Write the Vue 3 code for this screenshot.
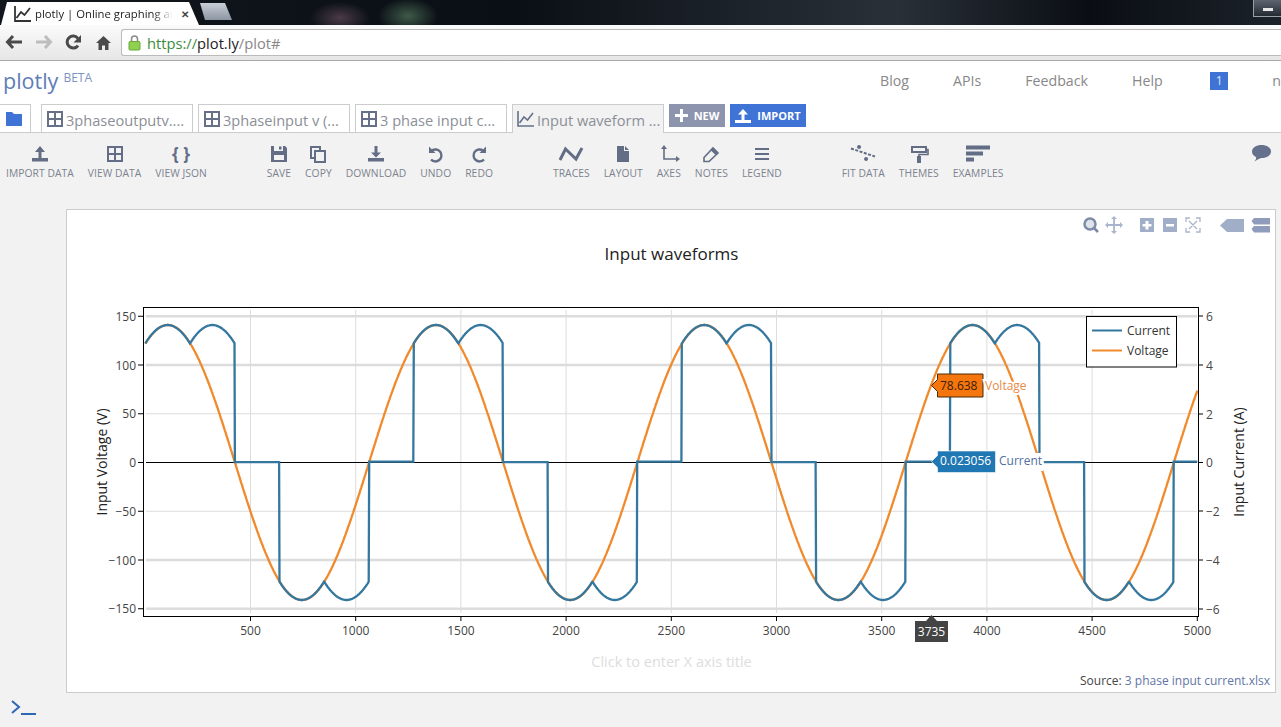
<script setup>
/* =========================
   Chart scales
========================= */
const xPos = (t) => 145.3 + t * 0.2104
const yPos = (v) => 462.5 - v * 0.975

const PERIOD = 1275

const voltage = (t) => -141 * Math.sin((2 * Math.PI * (t - 426)) / PERIOD)

/* rectified current, plotted on the same pixel range as the voltage */
const current = (t) => {
  const p = ((t % PERIOD) + PERIOD) % PERIOD
  const step = PERIOD / 6
  const n = Math.floor(p / step)
  const hump = (offset) => 141 * Math.cos((2 * Math.PI * (offset - step / 2)) / PERIOD)
  if (n === 0 || n === 1) return hump(p - n * step)
  if (n === 3 || n === 4) return -hump(p - n * step)
  return n === 5 ? 0.9 : 0.4
}

const buildPath = (fn) => {
  const pts = []
  for (let t = 0; t <= 5000; t += 2) pts.push(`${xPos(t).toFixed(1)},${yPos(fn(t)).toFixed(1)}`)
  return 'M' + pts.join('L')
}

const voltagePath = buildPath(voltage)
const currentPath = buildPath(current)

const xTicks = [500, 1000, 1500, 2000, 2500, 3000, 3500, 4000, 4500, 5000]
const leftTicks = [
  { v: 150, label: '150', wide: true },
  { v: 100, label: '100', wide: true },
  { v: 50, label: '50' },
  { v: 0, label: '0' },
  { v: -50, label: '−50' },
  { v: -100, label: '−100', wide: true },
  { v: -150, label: '−150', wide: true }
]
const rightTicks = [
  { y: 316, label: '6' },
  { y: 365, label: '4' },
  { y: 414, label: '2' },
  { y: 462.5, label: '0' },
  { y: 511, label: '−2' },
  { y: 560, label: '−4' },
  { y: 609, label: '−6' }
]

/* =========================
   Toolbar
========================= */
const gridIcon = 'M6 1h16v16H6z M8 3h5v5H8z M15 3h5v5h-5z M8 10h5v5H8z M15 10h5v5h-5z'

const toolGroups = [
  [
    { label: 'Import Data', fill: 'M14 1l5 6h-3.500v6h-3V7H9z M6 13h16v3.500H6z' },
    { label: 'View Data', fill: gridIcon },
    { label: 'View JSON', glyph: '{ }' }
  ],
  [
    { label: 'Save', fill: 'M6 1h3v5h9V1h2l2 2v14H6z M14 1.500h2.500v3H14z M9 10h10v5H9z' },
    { label: 'Copy', fill: 'M6 1h11v4h5v13H10v-4H6z M8 3h7v2h-5v7H8z M12 7h8v9h-8z' },
    { label: 'Download', fill: 'M12.500 1h3v6.500H19L14 12.500 9 7.500h3.500z M6 13h16v3.500H6z' },
    { label: 'Undo', fill: 'M7 1.500v6.500h6.500z', stroke: 'M10 5.500A6 6 0 1 1 9 14.500' },
    { label: 'Redo', fill: 'M21 1.500v6.500h-6.500z', stroke: 'M18 5.500A6 6 0 1 0 19 14.500' }
  ],
  [
    { label: 'Traces', stroke: 'M3 15L8.500 4 19 14 25 3', thick: true },
    { label: 'Layout', fill: 'M8 1h7v5h5v11H8z M16 1l4 4h-4z' },
    { label: 'Axes', fill: 'M9 0l3 4H6z M25 14l-4-3v6z', stroke: 'M9 3v11h12', thin: true },
    { label: 'Notes', fill: 'M16 2.500l5 5-2.500 2.500-5-5z', stroke: 'M7 12.500L16 3l5 5-9 8.500H7z', thin: true },
    { label: 'Legend', fill: 'M7 3h14v2H7z M7 8h14v2H7z M7 13h14v2H7z' }
  ],
  [
    {
      label: 'Fit Data',
      fill: 'M10 0a2 2 0 1 0 .1 0z M17 12a2 2 0 1 0 .1 0z',
      dash: 'M2 3.500L26 11.500'
    },
    {
      label: 'Themes',
      fill: 'M6 1h16v7H6z M8 3h12v3H8z M12 11h4v7h-4z',
      stroke: 'M21.500 4.500H23V9.500H14V12',
      thin: true
    },
    { label: 'Examples', fill: 'M2 .500h24v4H2z M2 6.500h17v4H2z M2 12.500h8v4H2z' }
  ]
]

const docTabs = [
  { title: '3phaseoutputv....', icon: 'grid' },
  { title: '3phaseinput v (...', icon: 'grid' },
  { title: '3 phase input c...', icon: 'grid' },
  { title: 'Input waveform ...', icon: 'line', active: true }
]

const navLinks = ['Blog', 'APIs', 'Feedback', 'Help']
</script>

<template>
  <div class="window">
    <!-- Browser chrome -->
    <div class="tabstrip">
      <div class="browser-tab">
        <svg class="favicon" width="17" height="16" viewBox="0 0 17 16">
          <path d="M1 0v15h16" fill="none" stroke="#333" stroke-width="1.800" />
          <path d="M2.500 12L7 6l3.500 3L16 2" fill="none" stroke="#333" stroke-width="1.800" />
        </svg>
        <span class="browser-title">plotly | Online graphing ar</span>
        <span class="browser-close">✕</span>
      </div>
      <div class="new-tab"></div>
      <div class="win-min"><i></i></div>
    </div>

    <div class="browser-bar">
      <div class="browser-btns">
        <svg width="18" height="16" viewBox="0 0 18 16">
          <path d="M8 2L2.500 8 8 14M3 8h14" fill="none" stroke="#4a4a4a" stroke-width="3" />
        </svg>
        <svg width="18" height="16" viewBox="0 0 18 16">
          <path d="M10 2l5.500 6L10 14M15 8H1" fill="none" stroke="#bdbdbd" stroke-width="3" />
        </svg>
        <svg width="17" height="16" viewBox="0 0 17 16">
          <path d="M13 11.500A6 6 0 1 1 13 4.500" fill="none" stroke="#4a4a4a" stroke-width="3" />
          <path d="M16 1v7.500H8.500z" fill="#4a4a4a" />
        </svg>
        <svg class="home" width="15" height="15" viewBox="0 0 15 15">
          <path d="M7.500 1L0 8h2.500v7h3.500v-4.500h3V15h3.500V8H15z" fill="#4a4a4a" />
        </svg>
      </div>
      <div class="address">
        <svg width="13" height="17" viewBox="0 0 13 17">
          <path d="M3.500 8V5a3 3 0 0 1 6 0v3" fill="none" stroke="#8a8a8a" stroke-width="1.500" />
          <rect x="1" y="7.500" width="11" height="8.500" rx="1" fill="#8fd14f" stroke="#6aa83a" />
        </svg>
        <span class="url"><span class="url-scheme">https://</span><span class="url-host">plot.ly</span>/plot#</span>
      </div>
    </div>

    <!-- Plotly header -->
    <header class="site-head">
      <div class="logo">plotly<sup>BETA</sup></div>
      <nav class="site-nav">
        <a v-for="link in navLinks" :key="link">{{ link }}</a>
        <span class="badge">1</span>
        <a class="user">n</a>
      </nav>
    </header>

    <div class="tabs">
      <div class="folder-tab">
        <svg width="16" height="14" viewBox="0 0 16 14">
          <path d="M0 0h6l2 2h8v12H0z" fill="#3f74d6" />
        </svg>
      </div>
      <div v-for="tab in docTabs" :key="tab.title" class="doc-tab" :class="{ active: tab.active }">
        <svg width="18" height="16" viewBox="0 0 18 16">
          <path
            v-if="tab.icon === 'grid'"
            d="M1 0h16v16H1z M3 2h5v5H3z M10 2h5v5h-5z M3 9h5v5H3z M10 9h5v5h-5z"
            fill="#667089"
            fill-rule="evenodd"
          />
          <g v-else fill="none" stroke="#667089" stroke-width="1.600">
            <path d="M1 0v15h16" />
            <path d="M2.500 12L7 6l3.500 3L16 2" />
          </g>
        </svg>
        <span>{{ tab.title }}</span>
      </div>
      <button class="head-btn grey">
        <svg width="13" height="13" viewBox="0 0 13 13"><path d="M5 0h3v5h5v3H8v5H5V8H0V5h5z" fill="#fff" /></svg>
        NEW
      </button>
      <button class="head-btn blue">
        <svg width="16" height="14" viewBox="0 0 16 14"><path d="M8 0l5 5.500H9.500V11h-3V5.500H3z M0 11h16v3H0z" fill="#fff" /></svg>
        IMPORT
      </button>
    </div>

    <!-- Tool row -->
    <div class="tools">
      <div v-for="(group, i) in toolGroups" :key="i" class="tool-group">
        <div v-for="tool in group" :key="tool.label" class="tool">
          <div v-if="tool.glyph" class="tool-glyph">{{ tool.glyph }}</div>
          <svg v-else width="28" height="18" viewBox="0 0 28 18">
            <path v-if="tool.fill" :d="tool.fill" fill="#636d85" fill-rule="evenodd" />
            <path
              v-if="tool.stroke"
              :d="tool.stroke"
              fill="none"
              stroke="#636d85"
              :stroke-width="tool.thick ? 3 : tool.thin ? 1.600 : 2.400"
            />
            <path v-if="tool.dash" :d="tool.dash" fill="none" stroke="#636d85" stroke-width="2" stroke-dasharray="3 1.500" />
          </svg>
          <span>{{ tool.label }}</span>
        </div>
      </div>
      <svg class="chat" width="19" height="17" viewBox="0 0 19 17">
        <path d="M9.500 0C14.500 0 19 2.500 19 6.500S14.500 13 10 13C8 13 6 14.500 2.500 16.500 4 14.500 4.500 13 4 12 1.500 11 0 9 0 6.500 0 2.500 4.500 0 9.500 0z" fill="#64708c" />
      </svg>
    </div>

    <!-- Plot card -->
    <main class="card">
      <svg class="plot" width="1208" height="482" viewBox="67 210 1208 482">
        <!-- modebar -->
        <g class="modebar">
          <circle cx="1090" cy="224" r="5.500" fill="#dfe3ea" stroke="#7d8ba8" stroke-width="2.500" />
          <path d="M1094 228l4 4" stroke="#7d8ba8" stroke-width="2.500" />
          <path d="M1114 218v14M1107 225h14" stroke="#a9b5cc" stroke-width="1.800" />
          <path d="M1114 216l-3 3h6z M1114 234l-3-3h6z M1105 225l3-3v6z M1123 225l-3-3v6z" fill="#a9b5cc" />
          <path d="M1140 218h14v14h-14z M1145.500 221v3h-3v2.500h3v3h3v-3h3V224h-3v-3z" fill="#a1aec8" fill-rule="evenodd" />
          <path d="M1163 218h14v14h-14z M1166 224v2.500h8V224z" fill="#a1aec8" fill-rule="evenodd" />
          <path d="M1186 222v-4h4M1196 218h4v4M1186 228v4h4M1196 232h4v-4M1189 221l8 8M1197 221l-8 8" fill="none" stroke="#a9b5cc" stroke-width="1.300" />
          <path d="M1220 225.500l7-6.500h17v13h-17z" fill="#a1aec8" />
          <path d="M1254 218h16v6.500h-16l-2.500-3.500z M1254 226h16v6.500h-16l-2.500-3.500z" fill="#8f9cbb" />
        </g>

        <text class="plot-title" x="671.500" y="259.500">Input waveforms</text>

        <!-- grid -->
        <g stroke="#dcdcdc">
          <line v-for="t in xTicks.slice(0, 9)" :key="t" :x1="xPos(t)" :x2="xPos(t)" y1="310" y2="613" />
          <line
            v-for="tick in leftTicks.filter((k) => k.v !== 0)"
            :key="tick.v"
            x1="146"
            x2="1197"
            :y1="yPos(tick.v)"
            :y2="yPos(tick.v)"
            :stroke-width="tick.wide ? 2.400 : 1"
          />
        </g>
        <line x1="146" x2="1197" y1="462.500" y2="462.500" stroke="#000" />

        <!-- traces -->
        <path :d="voltagePath" fill="none" stroke="#f08a2c" stroke-width="2.300" />
        <path :d="currentPath" fill="none" stroke="#35789f" stroke-width="2.300" />

        <!-- frame and ticks -->
        <rect x="143.500" y="307.500" width="1055" height="309" fill="none" stroke="#000" />
        <g stroke="#000">
          <line v-for="t in xTicks" :key="t" :x1="xPos(t)" :x2="xPos(t)" y1="616" y2="621" />
          <line v-for="tick in leftTicks" :key="tick.v" x1="138" x2="143" :y1="yPos(tick.v)" :y2="yPos(tick.v)" />
          <line v-for="tick in rightTicks" :key="tick.y" x1="1198" x2="1203" :y1="tick.y" :y2="tick.y" />
        </g>
        <g class="tick-text">
          <text v-for="t in xTicks" :key="t" :x="xPos(t)" y="635" text-anchor="middle">{{ t }}</text>
          <text v-for="tick in leftTicks" :key="tick.v" x="136" :y="yPos(tick.v) + 4.500" text-anchor="end">{{ tick.label }}</text>
          <text v-for="tick in rightTicks" :key="tick.y" x="1206" :y="tick.y + 4.500">{{ tick.label }}</text>
        </g>

        <text class="axis-title" transform="translate(106.500 462) rotate(-90)">Input Voltage (V)</text>
        <text class="axis-title" transform="translate(1243.500 462) rotate(-90)">Input Current (A)</text>
        <text class="x-title" x="671.500" y="666.500">Click to enter X axis title</text>

        <!-- legend -->
        <rect x="1086.500" y="316.500" width="90" height="50.500" fill="#fff" stroke="#000" />
        <line x1="1092" x2="1122" y1="330.500" y2="330.500" stroke="#35789f" stroke-width="2" />
        <line x1="1092" x2="1122" y1="350.500" y2="350.500" stroke="#f08a2c" stroke-width="2" />
        <text class="legend-text" x="1127" y="335">Current</text>
        <text class="legend-text" x="1127" y="355">Voltage</text>

        <!-- hover labels -->
        <path d="M931.500 385.500l6-6v-5.500h45.500v23H937.500v-5.500z" fill="#f5760f" stroke="#4a2a08" />
        <text class="hover-num" x="940" y="390" fill="#3c2105">78.638</text>
        <text class="hover-name" x="985" y="390" fill="#e98a45">Voltage</text>

        <rect x="995" y="453" width="48" height="18" fill="#fff" />
        <path d="M931.500 461.500l6-6v-4.500h58v21.500h-58v-5z" fill="#1f77b4" stroke="#fff" stroke-width=".6" />
        <text class="hover-num" x="940" y="465" fill="#fff">0.023056</text>
        <text class="hover-name" x="999" y="465" fill="#4f6f9f">Current</text>

        <path d="M931.500 615l5.500 6h11v21h-33v-21h11z" fill="#444" />
        <text class="hover-num" x="931.500" y="635.500" fill="#fff" text-anchor="middle">3735</text>
      </svg>
      <div class="source">Source: <a>3 phase input current.xlsx</a></div>
    </main>

    <svg class="prompt" width="26" height="16" viewBox="0 0 26 16">
      <path d="M1 1l7 6-7 6" fill="none" stroke="#2f66b5" stroke-width="2" />
      <path d="M10 14h15" stroke="#2f66b5" stroke-width="2" />
    </svg>
  </div>
</template>

<style>
html,
body {
  margin: 0;
  overflow: hidden;
}
</style>

<style scoped>
.window {
  position: relative;
  width: 1281px;
  height: 727px;
  overflow: hidden;
  display: flex;
  flex-direction: column;
  background: #f2f2f2;
  font-family: "Open Sans", sans-serif;
}

/* Browser chrome */
.tabstrip {
  position: relative;
  height: 25px;
  flex: none;
  display: flex;
  align-items: flex-end;
  padding-left: 1px;
  background:
    radial-gradient(ellipse 30px 16px at 340px 18px, #4a3a48, transparent),
    radial-gradient(ellipse 30px 18px at 408px 16px, #3e5a48, transparent),
    linear-gradient(90deg, #12171d 0, #0a0f15 40%, #2a3038 70%, #0a0e14 85%, #1c2229 100%);
}

.browser-tab {
  width: 198px;
  height: 23px;
  margin-right: -4px;
  display: flex;
  align-items: center;
  padding: 0 0 0 13px;
  box-sizing: border-box;
  background: #fff;
  clip-path: polygon(0 100%, 6px 0, 188px 0, 198px 100%);
}

.favicon {
  flex: none;
  margin-right: 4px;
}

.browser-title {
  width: 138px;
  font-size: 11.300px;
  color: #222;
  white-space: nowrap;
  overflow: hidden;
  -webkit-mask-image: linear-gradient(90deg, #000 85%, transparent);
  mask-image: linear-gradient(90deg, #000 85%, transparent);
}

.browser-close {
  margin-left: 8px;
  font-size: 10px;
  font-weight: 700;
  color: #444;
}

.new-tab {
  width: 32px;
  height: 17px;
  margin: 0 0 5px 5px;
  background: linear-gradient(#c9ced6, #8c95a3);
  clip-path: polygon(0 0, 25px 0, 100% 100%, 5px 100%);
}

.win-min {
  position: absolute;
  top: 0;
  right: 0;
  width: 28px;
  height: 17px;
  display: flex;
  align-items: center;
  justify-content: center;
  box-sizing: border-box;
  border: 1px solid #9aa0a8;
  border-top: none;
  border-right: none;
  background: linear-gradient(#5d6570, #242a32);
}

.win-min i {
  width: 10px;
  height: 3px;
  margin-top: 3px;
  background: #e8e8e8;
}

.browser-bar {
  height: 36px;
  flex: none;
  box-sizing: border-box;
  display: flex;
  padding-top: 4px;
  border-bottom: 1px solid #a8a8a8;
  background: linear-gradient(#fbfbfb, #e6e6e6);
}

.browser-btns {
  width: 121px;
  height: 26px;
  flex: none;
  display: flex;
  align-items: center;
  gap: 12px;
  padding-left: 5px;
  box-sizing: border-box;
}

.home {
  margin-left: 2px;
}

.address {
  flex: 1;
  height: 27px;
  box-sizing: border-box;
  display: flex;
  align-items: center;
  gap: 6px;
  padding-left: 6px;
  background: #fff;
  border: 1px solid #bbb;
  border-right: none;
  border-radius: 3px 0 0 3px;
}

.url {
  font-size: 14.700px;
  color: #888;
}

.url-scheme {
  color: #3c8c3c;
}

.url-host {
  color: #222;
}

/* Plotly header */
.site-head {
  height: 43px;
  flex: none;
  display: flex;
  justify-content: space-between;
  box-sizing: border-box;
  background: #fff;
}

.logo {
  padding: 5px 0 0 3px;
  font-size: 21.500px;
  color: #5d7db8;
}

.logo sup {
  margin-left: 5px;
  font-size: 12px;
  color: #7d93c1;
  vertical-align: 7px;
  line-height: 0;
}

.site-nav {
  display: flex;
  align-items: center;
  gap: 44px;
  padding-top: 0;
  height: 38px;
  font-size: 14.200px;
  color: #888;
  width: 401px;
  box-sizing: border-box;
}

.badge {
  width: 18px;
  height: 18px;
  margin: 2px 0 0 3.500px;
  background: #3f74d6;
  color: #dfe8fa;
  font-size: 12px;
  line-height: 18px;
  text-align: center;
}

.tabs {
  height: 29px;
  flex: none;
  box-sizing: border-box;
  display: flex;
  align-items: flex-start;
  gap: 5px;
  background: #fff;
  border-bottom: 1px solid #ccc;
}

.folder-tab {
  width: 31px;
  height: 28px;
  margin-right: 5px;
  box-sizing: border-box;
  display: flex;
  align-items: center;
  padding-left: 6px;
  border-right: 1px solid #ccc;
  border-top: 1px solid #ccc;
}

.doc-tab {
  width: 152px;
  height: 28px;
  box-sizing: border-box;
  display: flex;
  align-items: center;
  gap: 2px;
  padding-left: 4px;
  border: 1px solid #ccc;
  border-bottom: none;
  font-size: 14.600px;
  color: #8b8f97;
  white-space: nowrap;
}

.doc-tab span {
  padding-top: 2px;
}

.doc-tab.active {
  height: 29px;
  background: #f2f2f2;
}

.head-btn {
  height: 23px;
  padding: 0;
  border: none;
  display: flex;
  align-items: center;
  justify-content: center;
  gap: 6px;
  font-family: inherit;
  font-size: 11px;
  font-weight: 700;
  color: #fff;
}

.head-btn.grey {
  width: 56px;
  background: #8d95ae;
}

.head-btn.blue {
  width: 76px;
  background: #3f74d6;
}

/* Tool row */
.tools {
  position: relative;
  height: 76px;
  flex: none;
  display: flex;
  gap: 60px;
  padding: 12px 0 0 6px;
  box-sizing: border-box;
}

.tool-group {
  display: flex;
  gap: 14px;
}

.tool {
  display: flex;
  flex-direction: column;
  align-items: center;
  gap: 3px;
  font-size: 10.300px;
  letter-spacing: .05px;
  color: #7c828f;
  text-transform: uppercase;
  white-space: nowrap;
}

.tool svg,
.tool-glyph {
  height: 18px;
}

/* icon box may be wider than a short label, don't let it widen the item */
.tool svg {
  margin: 0 -8px;
}

.tool-glyph {
  font-size: 17px;
  line-height: 18px;
  font-weight: 700;
  color: #636d85;
}

.chat {
  position: absolute;
  top: 12px;
  right: 10px;
}

/* Plot card */
.card {
  position: relative;
  width: 1210px;
  height: 484px;
  margin-left: 66px;
  box-sizing: border-box;
  flex: none;
  background: #fff;
  border: 1px solid #ccc;
}

.plot {
  display: block;
}

.plot text {
  font-family: "Open Sans", sans-serif;
}

.plot-title {
  font-size: 17px;
  fill: #222;
  text-anchor: middle;
}

.tick-text {
  font-size: 12px;
  fill: #444;
}

.axis-title {
  font-size: 14px;
  fill: #222;
  text-anchor: middle;
}

.x-title {
  font-size: 14.500px;
  fill: #ddd;
  text-anchor: middle;
}

.legend-text {
  font-size: 12px;
  fill: #333;
}

.hover-num {
  font-size: 12px;
}

.hover-name {
  font-size: 12px;
  paint-order: stroke;
  stroke: #fff;
  stroke-width: 4px;
}

.source {
  position: absolute;
  right: 5px;
  bottom: 3px;
  font-size: 12px;
  color: #444;
}

.source a {
  color: #5f75a5;
}

.prompt {
  position: absolute;
  left: 11px;
  top: 700px;
}
</style>
